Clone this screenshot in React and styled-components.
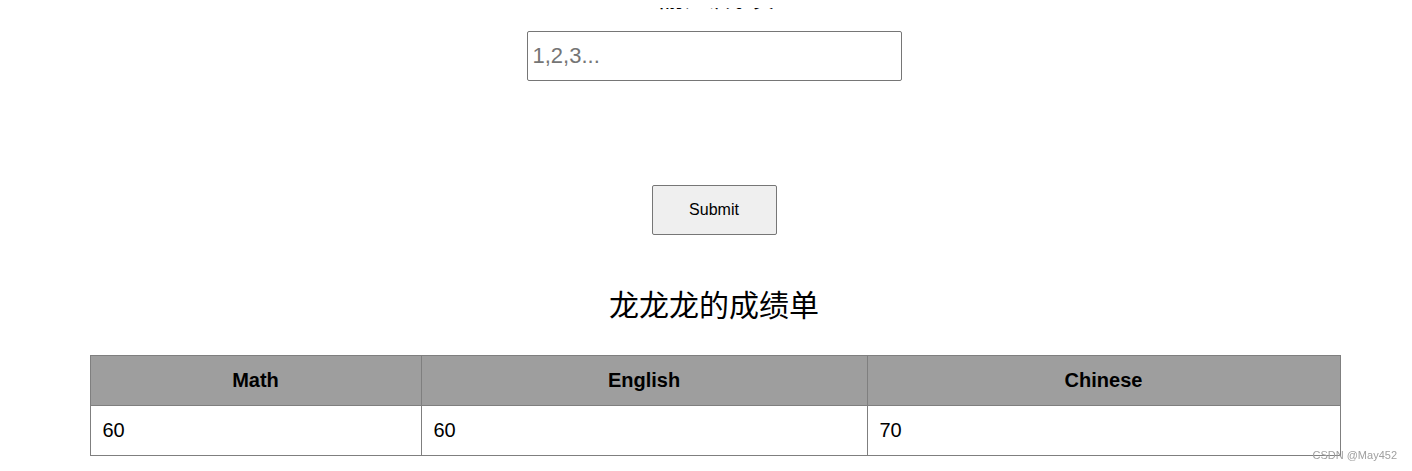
import React from "react"
import styled, { createGlobalStyle } from "styled-components"

const GlobalStyle = createGlobalStyle`
  body {
    margin: 8px;
    background: #fff;
    font-family: "Liberation Sans", Arial, "Noto Sans CJK SC", sans-serif;
    color: #000;
    overflow: hidden;
  }
`

const Page = styled.div`
  display: flex;
  flex-direction: column;
  align-items: center;
  padding-left: 16px;
  margin-top: -30px;
`

const Heading = styled.h2`
  margin: 0;
  height: 36px;
  font-family: "Liberation Sans", "Noto Sans CJK SC", sans-serif;
  font-weight: 400;
  font-size: 30px;
  line-height: 36px;
  text-align: center;
  margin-top: ${(p) => p.$top || 0}px;
`

const ScoreInput = styled.input`
  box-sizing: border-box;
  width: 375px;
  height: 50px;
  margin-top: 17px;
  padding: 0 5px;
  border: 1px solid #767676;
  border-radius: 2px;
  font-family: "Liberation Sans", Arial, sans-serif;
  font-size: 22px;
  outline: none;

  &::placeholder {
    color: #757575;
  }
`

const SubmitButton = styled.button`
  box-sizing: border-box;
  width: 125px;
  height: 50px;
  margin-top: 104px;
  background: #efefef;
  border: 1px solid #767676;
  border-radius: 2px;
  font-family: "Liberation Sans", Arial, sans-serif;
  font-size: 16px;
  color: #000;
`

const ScoreTable = styled.table`
  width: 1247px;
  margin-top: 31px;
  margin-left: 2px;
  border-collapse: collapse;
  table-layout: fixed;
  font-size: 20px;
`

const HeadCell = styled.th`
  width: ${(p) => p.$w}px;
  height: 49px;
  padding: 0;
  background: #9e9e9e;
  border: 1px solid #7f7f7f;
  font-weight: 700;
  text-align: center;
`

const Cell = styled.td`
  height: 49px;
  padding: 0 12px;
  border: 1px solid #7f7f7f;
  text-align: left;
`

const Watermark = styled.div`
  position: fixed;
  right: 15px;
  bottom: 10px;
  font-family: "Liberation Sans", Arial, sans-serif;
  font-size: 11px;
  color: #a0a0a0;
`

const subjects = [
  { name: "Math", width: 330, score: 60 },
  { name: "English", width: 445, score: 60 },
  { name: "Chinese", width: 472, score: 70 },
]

const App = () => {
  return (
    <>
      <GlobalStyle />
      <Page>
        <Heading>输入成绩</Heading>
        <ScoreInput placeholder="1,2,3..." />
        <SubmitButton>Submit</SubmitButton>
        <Heading $top={53}>龙龙龙的成绩单</Heading>
        <ScoreTable>
          <thead>
            <tr>
              {subjects.map((s) => (
                <HeadCell key={s.name} $w={s.width}>
                  {s.name}
                </HeadCell>
              ))}
            </tr>
          </thead>
          <tbody>
            <tr>
              {subjects.map((s) => (
                <Cell key={s.name}>{s.score}</Cell>
              ))}
            </tr>
          </tbody>
        </ScoreTable>
      </Page>
      <Watermark>CSDN @May452</Watermark>
    </>
  )
}

export default App
